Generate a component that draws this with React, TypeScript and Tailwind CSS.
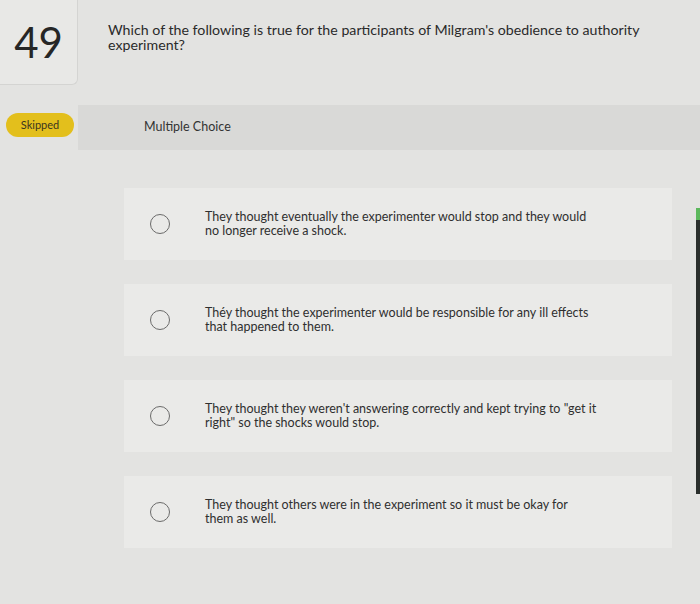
const OPTIONS = [
    ["They thought eventually the experimenter would stop and they would", "no longer receive a shock."],
    ["Théy thought the experimenter would be responsible for any ill effects", "that happened to them."],
    ["They thought they weren't answering correctly and kept trying to \"get it", "right\" so the shocks would stop."],
    ["They thought others were in the experiment so it must be okay for", "them as well."],
]

export default function App() {
    return (
        <main className="relative w-[700px] h-[604px] overflow-hidden bg-[#e3e3e1] text-[#333] font-['Lato',sans-serif]">
            <div className="flex">
                <div className="flex flex-col w-[78px] shrink-0">
                    <div className="flex items-center justify-center w-[78px] h-[85px] bg-[#e8e8e6] border-r border-b border-[#d4d4d2] rounded-br-md">
                        <span className="text-[42px] leading-none text-[#262626] font-normal">49</span>
                    </div>
                    <div className="mt-[28px] ml-[6px] flex items-center justify-center w-[68px] h-[24px] rounded-full bg-[#e3bf1c]">
                        <span className="text-[11px] text-[#3a3420]">Skipped</span>
                    </div>
                </div>

                <div className="flex flex-col flex-1">
                    <p className="mt-[22px] pl-[30px] pr-[40px] text-[14.2px] leading-[15px] text-[#2a2a2a]">
                        Which of the following is true for the participants of Milgram's obedience to authority experiment?
                    </p>

                    <div className="mt-[53px] h-[45px] flex items-center pl-[66px] bg-[#d9d9d7]">
                        <span className="text-[12.5px] text-[#333]">Multiple Choice</span>
                    </div>

                    <div className="flex flex-col gap-[24px] mt-[38px] pl-[46px] pr-[28px]">
                        {OPTIONS.map(([first, second]) => (
                            <div key={first} className="flex items-center h-[72px] bg-[#eaeae8]">
                                <div className="ml-[26px] w-[20px] h-[20px] rounded-full border-[1.5px] border-[#6a6a6a] shrink-0" />
                                <p className="ml-[35px] text-[12.5px] leading-[14px] text-[#2f2f2f]">
                                    {first}<br />{second}
                                </p>
                            </div>
                        ))}
                    </div>
                </div>
            </div>

            <div className="absolute right-0 top-[208px] w-[4px] h-[286px] bg-[#2a2f2c]">
                <div className="h-[12px] bg-[#5cb85c]" />
            </div>
        </main>
    )
}
